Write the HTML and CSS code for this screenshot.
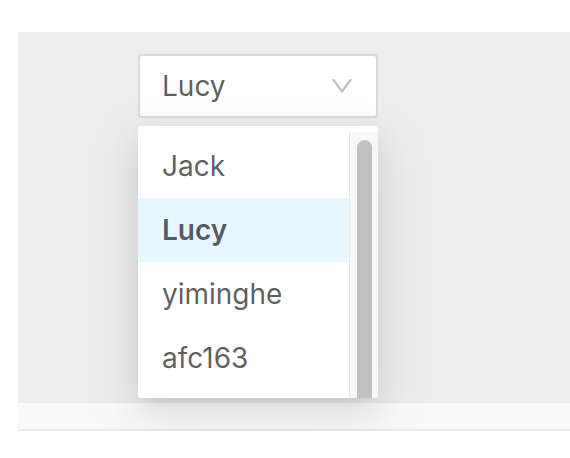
FILE: index.html
```html
<!DOCTYPE html>
<html>
<head>
<meta charset="utf-8">
<link rel="stylesheet" href="styles.css">
</head>
<body>
<div class="page">
  <div class="stage">
    <div class="select-wrap">
      <div class="select">
        <span class="select-value">Lucy</span>
        <svg class="arrow" viewBox="64 64 896 896" width="24" height="24" aria-hidden="true"><path d="M884 256h-75c-5.1 0-9.9 2.5-12.9 7L512 654.2 227.9 263c-3-4.5-7.8-7-12.9-7h-75c-6.5 0-10.3 7.4-6.5 12.1l352.6 486.1c12.8 17.6 39 17.6 51.7 0l352.6-486.1c3.9-4.7.1-12.1-6.4-12.1z"/></svg>
      </div>
      <div class="dropdown">
        <ul class="options">
          <li class="option">Jack</li>
          <li class="option selected">Lucy</li>
          <li class="option">yiminghe</li>
          <li class="option">afc163</li>
        </ul>
        <div class="track"><div class="thumb"></div></div>
      </div>
    </div>
  </div>
  <div class="strip"></div>
</div>
</body>
</html>
```
FILE: styles.css
```css
html, body {
  margin: 0;
  background: #ffffff;
}
body {
  font-family: Inter, "Liberation Sans", sans-serif;
  color: rgba(0, 0, 0, 0.65);
}
.page {
  padding: 32px 0 0 18px;
}
.stage {
  background: #ededed;
  height: 371px;
  box-sizing: border-box;
  padding: 22px 0 0 120px;
}
.strip {
  height: 26px;
  background: #fafafa;
  border-bottom: 2px solid #ebebeb;
}
.select-wrap {
  position: relative;
  width: 240px;
}
.select {
  box-sizing: border-box;
  width: 240px;
  height: 64px;
  background: #ffffff;
  border: 2px solid #d9d9d9;
  border-radius: 4px;
  display: flex;
  align-items: center;
  justify-content: space-between;
  padding: 0 22px;
}
.select-value {
  font-size: 28px;
  line-height: 44px;
  color: rgba(0, 0, 0, 0.65);
}
.arrow {
  fill: #bfbfbf;
  display: block;
}
.dropdown {
  position: absolute;
  top: 72px;
  left: 0;
  width: 240px;
  height: 272px;
  background: #ffffff;
  border-radius: 4px;
  overflow: hidden;
  display: flex;
  box-shadow: 0 6px 12px -8px rgba(0, 0, 0, 0.12), 0 12px 32px 0 rgba(0, 0, 0, 0.08), 0 18px 56px 16px rgba(0, 0, 0, 0.05);
}
.options {
  list-style: none;
  margin: 0;
  padding: 8px 0;
  flex: 1;
}
.option {
  height: 64px;
  line-height: 64px;
  padding: 0 24px;
  font-size: 28px;
  color: rgba(0, 0, 0, 0.65);
}
.option.selected {
  background: #e6f7ff;
  font-weight: 600;
}
.track {
  width: 29px;
  margin-top: 6px;
  border-left: 1px solid #e6e6e6;
  background: #f8f8f8;
  padding: 8px 0 0 7px;
  box-sizing: border-box;
}
.thumb {
  width: 15px;
  height: 300px;
  background: #c1c1c1;
  border-radius: 8px;
}
```
